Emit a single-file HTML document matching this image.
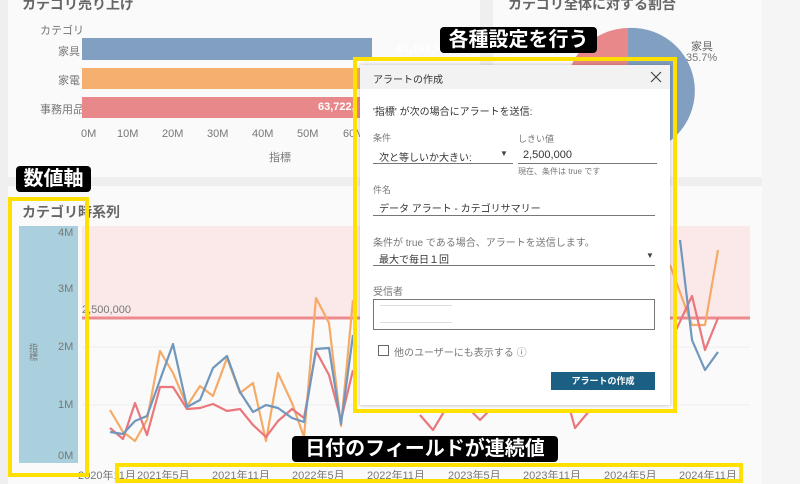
<!DOCTYPE html>
<html><head><meta charset="utf-8"><style>
*{margin:0;padding:0;box-sizing:border-box}
body{width:800px;height:484px;overflow:hidden;background:#efefef;font-family:"Liberation Sans","Noto Sans CJK JP",sans-serif;position:relative;color:#555}
.a{position:absolute}
.t{font-size:11px;color:#777;white-space:nowrap}
.blk{background:#000;color:#fff;font-weight:bold;border-radius:4px;text-align:center;white-space:nowrap}
.yb{border:4px solid #ffe000}
</style></head><body>
<div class="a" style="left:8px;top:0;width:472px;height:177px;background:#fafafa"></div>
<div class="a" style="left:493px;top:0;width:269px;height:177px;background:#fafafa"></div>
<div class="a" style="left:8px;top:186px;width:754px;height:298px;background:#fafafa"></div>
<div class="a" style="left:762px;top:0;width:38px;height:484px;background:#f5f5f5"></div>

<div class="a" style="left:22px;top:-6px;font-size:14px;color:#666;font-weight:bold">カテゴリ売り上げ</div>
<div class="a t" style="left:40px;top:22px">カテゴリ</div>
<div class="a t" style="left:58px;top:43px">家具</div>
<div class="a t" style="left:58px;top:72px">家電</div>
<div class="a t" style="left:40px;top:101px">事務用品</div>
<div class="a" style="left:82px;top:38px;width:290px;height:22px;background:#819fc0"></div>
<div class="a" style="left:82px;top:68px;width:290px;height:21px;background:#f5b06f"></div>
<div class="a" style="left:82px;top:97px;width:290px;height:21px;background:#e9888b"></div>
<div class="a" style="left:318px;top:101px;font-size:11px;color:#fff;font-weight:bold">63,722,</div>
<div class="a" style="left:397px;top:43px;font-size:11px;color:#fff;font-weight:bold">81,166,9</div>
<div class="a t" style="left:81px;top:128px">0M</div>
<div class="a t" style="left:117px;top:128px">10M</div>
<div class="a t" style="left:162px;top:128px">20M</div>
<div class="a t" style="left:207px;top:128px">30M</div>
<div class="a t" style="left:252px;top:128px">40M</div>
<div class="a t" style="left:297px;top:128px">50M</div>
<div class="a t" style="left:343px;top:128px">60M</div>
<div class="a t" style="left:269px;top:149px">指標</div>

<div class="a" style="left:508px;top:-6px;font-size:14px;color:#666;font-weight:bold">カテゴリ全体に対する割合</div>
<svg class="a" style="left:560px;top:25px" width="140" height="140"><path d="M68,3 A63,63 0 0 1 110,116 L68,66Z" fill="#819fc0"/><path d="M68,3 A63,63 0 0 0 8,50 L68,66Z" fill="#e9888b"/><path d="M8,50 A63,63 0 0 0 110,116 L68,66Z" fill="#f5b06f"/></svg>
<div class="a t" style="left:691px;top:38px;color:#666">家具</div>
<div class="a t" style="left:686px;top:52px;color:#777">35.7%</div>

<div class="a" style="left:22px;top:202px;font-size:14px;color:#666;font-weight:bold">カテゴリ時系列</div>
<div class="a" style="left:19px;top:226px;width:59px;height:237px;background:#a9d0dc"></div>
<div class="a" style="left:27px;top:343px;font-size:9px;color:#777;writing-mode:vertical-rl">指標</div>
<div class="a" style="left:82px;top:226px;width:668px;height:92px;background:#fbe9ea"></div>
<div class="a t" style="left:58px;top:227px">4M</div>
<div class="a t" style="left:58px;top:283px">3M</div>
<div class="a t" style="left:58px;top:341px">2M</div>
<div class="a t" style="left:58px;top:399px">1M</div>
<div class="a t" style="left:58px;top:450px">0M</div>
<div class="a t" style="left:82px;top:304px">2,500,000</div>
<svg class="a" style="left:0;top:0" width="800" height="484" fill="none" stroke-width="2.2" stroke-linejoin="round">
<line x1="82" y1="318" x2="750" y2="318" stroke="#ec8a8e" stroke-width="3"/>
<line x1="82" y1="347" x2="750" y2="347" stroke="#eee" stroke-width="1"/>
<line x1="82" y1="405" x2="750" y2="405" stroke="#eee" stroke-width="1"/>
<polyline stroke="#f5ab67" points="110,410 123,432 135,441 147,420 160,351 173,373 187,406 200,386 213,396 227,358 240,393 253,383 266,441 278,373 292,403 304,437 316,298 329,323 341,426 353,300"/>
<polyline stroke="#e9777c" points="110,428 123,439 135,403 147,435 160,387 173,387 187,409 200,408 213,404 227,411 240,409 253,425 266,437 278,421 292,409 304,418 316,351 329,375 341,420 353,370"/>
<polyline stroke="#7097bd" points="110,432 123,434 135,421 147,416 160,380 173,344 187,407 200,400 213,368 227,356 240,392 253,412 266,405 278,408 292,418 304,422 316,349 329,348 341,424 353,335"/>
<polyline stroke="#f5ab67" points="670,265 692,325 705,325 718,250"/>
<polyline stroke="#e9777c" points="676,330 692,296 705,350 718,318"/>
<polyline stroke="#7097bd" points="680,240 692,340 705,370 718,352"/>
<polyline stroke="#e9777c" points="420,415 433,430 445,410"/>
<polyline stroke="#e9777c" points="470,410 480,420 490,410"/>
<polyline stroke="#e9777c" points="570,410 575,428 590,410"/>
</svg>
<div class="a t" style="left:78px;top:467px">2020年11月</div>
<div class="a t" style="left:137px;top:467px">2021年5月</div>
<div class="a t" style="left:212px;top:467px">2021年11月</div>
<div class="a t" style="left:292px;top:467px">2022年5月</div>
<div class="a t" style="left:367px;top:467px">2022年11月</div>
<div class="a t" style="left:448px;top:467px">2023年5月</div>
<div class="a t" style="left:523px;top:467px">2023年11月</div>
<div class="a t" style="left:604px;top:467px">2024年5月</div>
<div class="a t" style="left:679px;top:467px">2024年11月</div>

<div class="a" style="left:360px;top:65px;width:310px;height:340px;background:#fff;box-shadow:0 0 4px rgba(0,0,0,.25)">
 <div style="height:24px;background:#f2f2f2;font-size:10px;color:#333;padding:6px 0 0 13px">アラートの作成</div>
 <svg class="a" style="right:8px;top:6px" width="12" height="12"><path d="M1,1 L11,11 M11,1 L1,11" stroke="#444" stroke-width="1.2"/></svg>
 <div class="a" style="left:13px;top:38px;font-size:10px;color:#333;white-space:nowrap">'指標' が次の場合にアラートを送信:</div>
 <div class="a" style="left:13px;top:66px;font-size:9px;color:#777">条件</div>
 <div class="a" style="left:19px;top:84px;font-size:10px;color:#333">次と等しいか大きい:</div>
 <div class="a" style="left:140px;top:84px;font-size:8px;color:#444">▼</div>
 <div class="a" style="left:13px;top:98px;width:140px;border-top:1px solid #777"></div>
 <div class="a" style="left:158px;top:67px;font-size:9px;color:#777">しきい値</div>
 <div class="a" style="left:163px;top:84px;font-size:11px;color:#333">2,500,000</div>
 <div class="a" style="left:158px;top:98px;width:139px;border-top:1px solid #777"></div>
 <div class="a" style="left:158px;top:101px;font-size:8px;color:#777;white-space:nowrap">現在、条件は true です</div>
 <div class="a" style="left:13px;top:118px;font-size:9px;color:#777">件名</div>
 <div class="a" style="left:19px;top:135px;font-size:10px;color:#333;white-space:nowrap">データ アラート - カテゴリサマリー</div>
 <div class="a" style="left:13px;top:150px;width:282px;border-top:1px solid #777"></div>
 <div class="a" style="left:13px;top:169px;font-size:10px;color:#777;white-space:nowrap">条件が true である場合、アラートを送信します。</div>
 <div class="a" style="left:19px;top:186px;font-size:10px;color:#333">最大で毎日１回</div>
 <div class="a" style="left:286px;top:186px;font-size:8px;color:#444">▼</div>
 <div class="a" style="left:13px;top:200px;width:282px;border-top:1px solid #777"></div>
 <div class="a" style="left:13px;top:218px;font-size:10px;color:#777">受信者</div>
 <div class="a" style="left:13px;top:234px;width:282px;height:31px;border:1px solid #777"><div style="margin:5px 0 0 6px;width:72px;border-top:1px solid #ddd"></div><div style="margin:16px 0 0 6px;width:72px;border-top:1px solid #ddd"></div></div>
 <div class="a" style="left:18px;top:280px;width:11px;height:11px;border:1px solid #666"></div>
 <div class="a" style="left:34px;top:279px;font-size:10px;color:#777;white-space:nowrap">他のユーザーにも表示する ⓘ</div>
 <div class="a" style="left:191px;top:307px;width:104px;height:18px;background:#1b5f84;color:#fff;font-size:9px;font-weight:bold;text-align:center;line-height:18px">アラートの作成</div>
</div>

<div class="a yb" style="left:353px;top:57px;width:324px;height:356px"></div>
<div class="a yb" style="left:8px;top:197px;width:81px;height:280px"></div>
<div class="a yb" style="left:115px;top:463px;width:628px;height:20px"></div>
<div class="a blk" style="left:440px;top:27px;width:157px;height:26px;font-size:20px;line-height:26px">各種設定を行う</div>
<div class="a blk" style="left:16px;top:166px;width:75px;height:26px;font-size:20px;line-height:26px">数値軸</div>
<div class="a blk" style="left:292px;top:436px;width:266px;height:26px;font-size:20px;line-height:26px">日付のフィールドが連続値</div>
</body></html>
